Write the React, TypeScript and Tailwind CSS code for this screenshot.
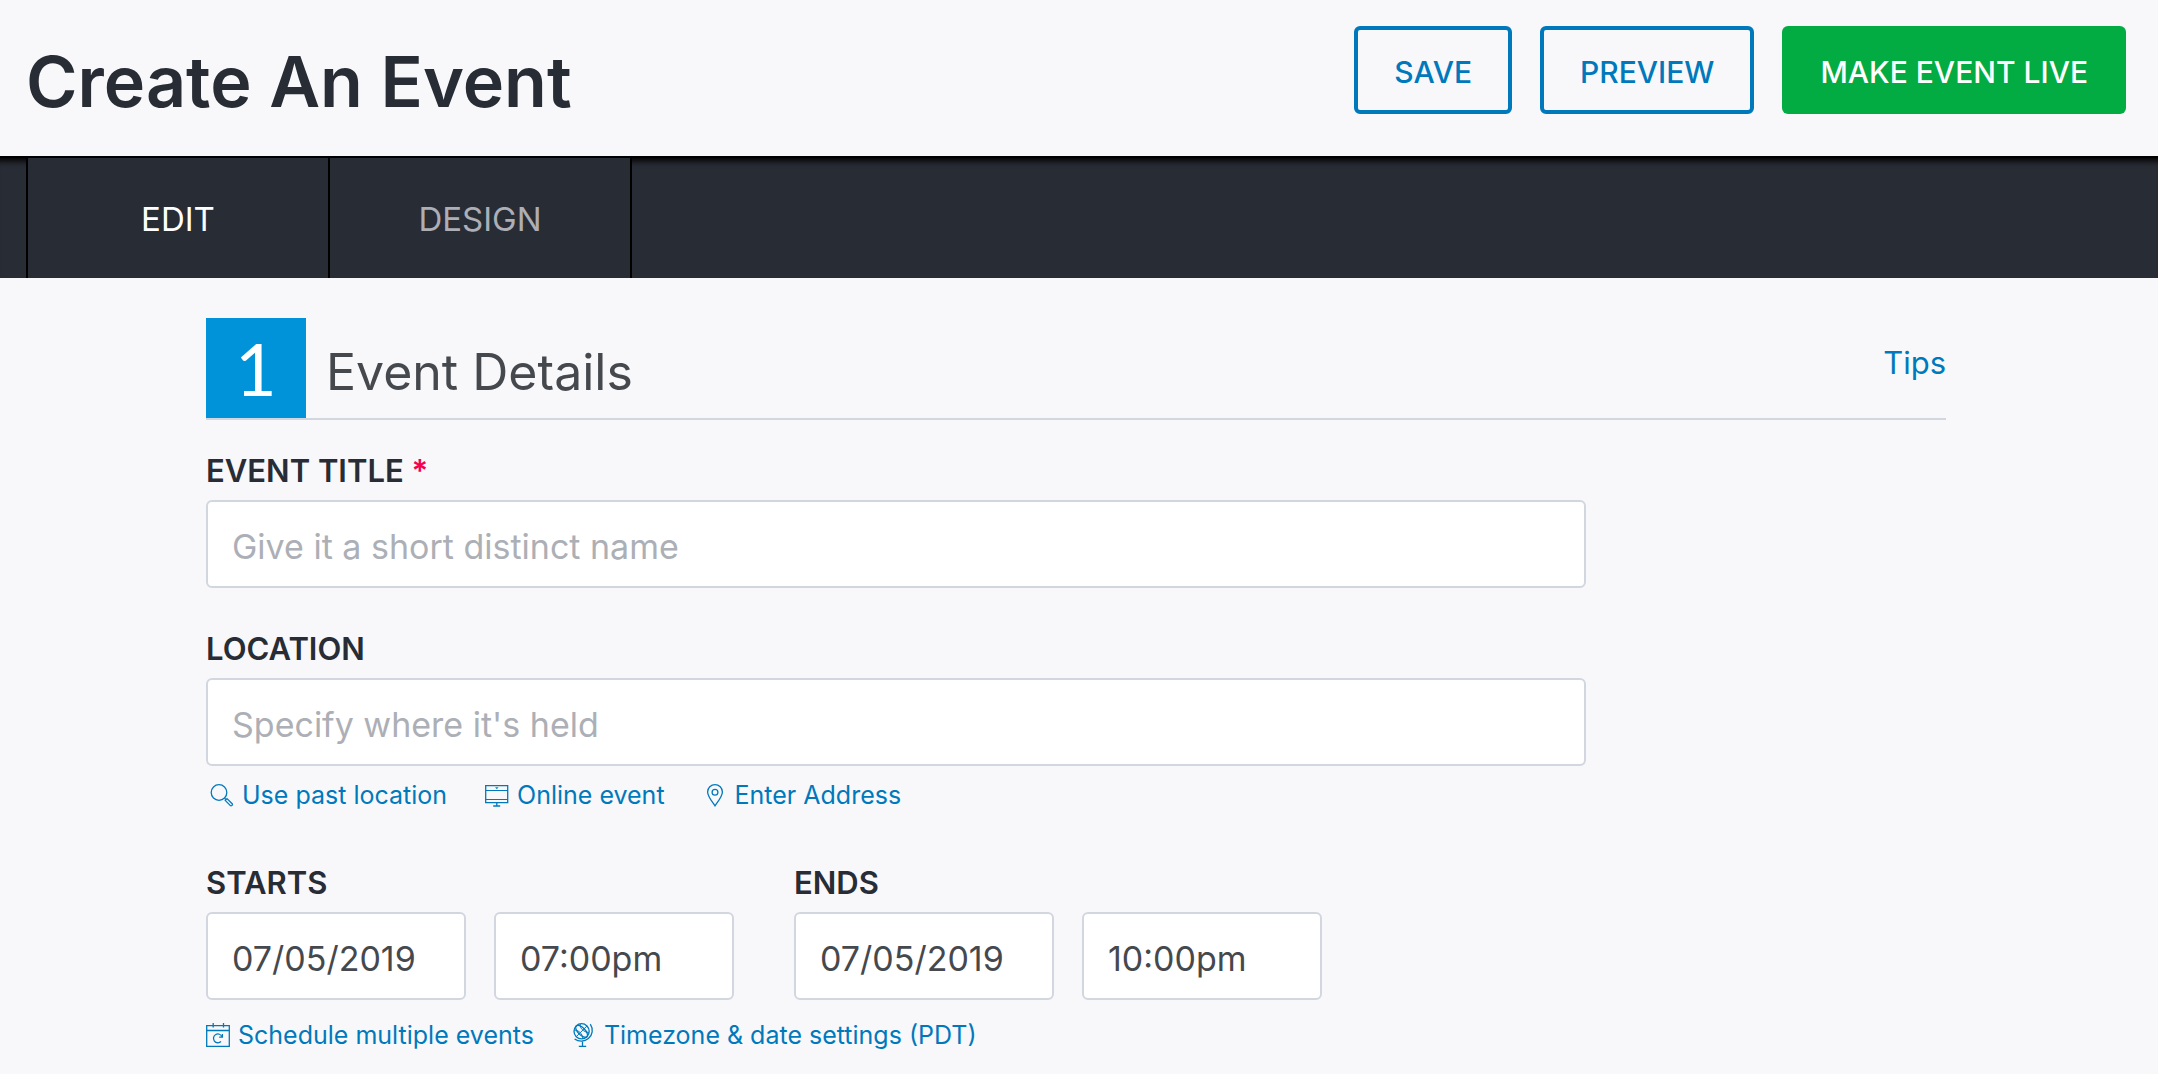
import { ReactNode } from "react";

const iconProps = {
  width: 24,
  height: 24,
  viewBox: "0 0 24 24",
  fill: "none",
  stroke: "currentColor",
  strokeWidth: 1.3,
  "aria-hidden": true,
  className: "shrink-0",
};

function SearchIcon() {
  return (
    <svg {...iconProps}>
      <circle cx="9" cy="9.5" r="7.8" />
      <path d="M14.6 15.2l1.4 1.4" />
      <path d="M15.2 17.4l5.2 5.2a.9.9 0 0 0 1.3 0l.5-.5a.9.9 0 0 0 0-1.3L17 15.6z" />
    </svg>
  );
}

function MonitorIcon() {
  return (
    <svg {...iconProps}>
      <path d="M.7 2.7h22v17H.7z" />
      <path d="M.7 7.5h22M.7 16.5h22" strokeWidth="1" />
      <path d="M10.7 4.6h2.2l-1.1 1.2z" strokeWidth=".8" />
      <path d="M11.8 19.7v3M8.2 23h7" />
    </svg>
  );
}

function PinIcon() {
  return (
    <svg {...iconProps}>
      <path d="M12 22.8C8.6 18 4.6 13.2 4.6 9a7.4 7.4 0 0 1 14.8 0c0 4.2-4 9-7.4 13.8z" />
      <circle cx="12" cy="9.3" r="2.9" />
    </svg>
  );
}

function CalendarIcon() {
  return (
    <svg {...iconProps}>
      <path d="M.7 2.7h22.6v20.6H.7z" />
      <path d="M.7 7.5h22.6M7.2 0v4.4M17.5 0v4.4" />
      <path d="M15 18.5a4.4 4.4 0 1 1 1-4.7" />
      <path d="M16.4 10.9v3.3h-3.3" />
    </svg>
  );
}

function GlobeIcon() {
  return (
    <svg {...iconProps}>
      <circle cx="9.6" cy="8.3" r="7.6" />
      <ellipse cx="9.6" cy="8.3" rx="3.6" ry="7.6" transform="rotate(-45 9.6 8.3)" />
      <path d="M4.3 13.6L15 2.9M8.2 1c-.6 4 3.6 8.4 8.6 8.4M2.2 7.2c4.4-.4 8.6 4 8.6 8.4" strokeWidth="1" />
      <path d="M18.3 1.2c3.2 4.8 2.4 10.8-1.9 14.4-4.1 3.4-9.7 3.4-13.8.4" />
      <path d="M10.5 18.4v4.8M6.8 23.3h7.4" />
    </svg>
  );
}

function Label({ htmlFor, children }: { htmlFor: string; children: ReactNode }) {
  return (
    <label
      htmlFor={htmlFor}
      className="block mb-[10px] text-[31px] leading-[38px] font-semibold text-[#282c35]"
    >
      {children}
    </label>
  );
}

const inputStyle =
  "h-[88px] rounded-md border-2 border-[#d2d6df] bg-white px-6 pt-1 text-[34px] text-[#45494e] placeholder:text-[#adafb6]";

function HelperLink({ icon, children }: { icon: ReactNode; children: ReactNode }) {
  return (
    <a href="#" className="flex items-center gap-2 text-[25px] leading-[30px] text-[#0079bc]">
      {icon}
      {children}
    </a>
  );
}

function DateTime({ id, label, date, time }: { id: string; label: string; date: string; time: string }) {
  return (
    <div>
      <Label htmlFor={id}>{label}</Label>
      <div className="flex gap-7">
        <input id={id} defaultValue={date} className={`${inputStyle} w-[260px]`} />
        <input aria-label={`${label} time`} defaultValue={time} className={`${inputStyle} w-[240px]`} />
      </div>
    </div>
  );
}

export default function App() {
  return (
    <div className="min-h-screen bg-[#f8f8fa] font-['Inter','Liberation_Sans',sans-serif]">
      <header className="flex items-start justify-between pt-[26px] pb-[30px] pl-[26px] pr-8">
        <h1 className="mt-3 text-[70px] leading-[88px] font-semibold text-[#282c35]">
          Create An Event
        </h1>
        <div className="flex gap-7 text-[30px] font-medium">
          <button className="h-[88px] rounded-md border-4 border-[#0079bc] px-9 pt-1 text-[#0079bc]">
            SAVE
          </button>
          <button className="h-[88px] rounded-md border-4 border-[#0079bc] px-9 pt-1 text-[#0079bc]">
            PREVIEW
          </button>
          <button className="h-[88px] rounded-md bg-[#02ac43] px-[38px] pt-1 text-white">
            MAKE EVENT LIVE
          </button>
        </div>
      </header>

      <nav className="flex h-[122px] border-t-2 border-black bg-[#282c35] pl-[26px] text-[33px] shadow-[inset_0_9px_6px_-6px_#000]">
        <a
          href="#"
          className="flex w-[302px] items-center justify-center border-l-2 border-black bg-[#282c35] pt-1 text-white"
        >
          EDIT
        </a>
        <a
          href="#"
          className="flex w-[304px] items-center justify-center border-x-2 border-black bg-[#282c35] pt-1 text-[#adafb6]"
        >
          DESIGN
        </a>
      </nav>

      <main className="pt-10 pl-[206px] pr-[212px]">
        <div className="flex items-start border-b-2 border-[#d2d6df]">
          <span className="size-[100px] bg-[#0093da] text-center font-['Lato',sans-serif] text-[72px] leading-[100px] text-white">
            1
          </span>
          <h2 className="ml-5 pt-2 text-[50px] leading-[92px] text-[#45494e]">
            Event Details
          </h2>
          <a href="#" className="ml-auto text-[31px] leading-[90px] text-[#0079bc]">
            Tips
          </a>
        </div>

        <form>
          <div className="mt-8">
            <Label htmlFor="title">
              EVENT TITLE <span className="text-[#f6004f]">*</span>
            </Label>
            <input
              id="title"
              placeholder="Give it a short distinct name"
              className={`${inputStyle} w-full max-w-[1380px]`}
            />
          </div>

          <div className="mt-[42px]">
            <Label htmlFor="location">LOCATION</Label>
            <input
              id="location"
              placeholder="Specify where it's held"
              className={`${inputStyle} w-full max-w-[1380px]`}
            />
            <div className="mt-[14px] flex gap-[38px] pl-1">
              <HelperLink icon={<SearchIcon />}>Use past location</HelperLink>
              <HelperLink icon={<MonitorIcon />}>Online event</HelperLink>
              <HelperLink icon={<PinIcon />}>Enter Address</HelperLink>
            </div>
          </div>

          <div className="mt-[54px] flex gap-[60px]">
            <DateTime id="starts" label="STARTS" date="07/05/2019" time="07:00pm" />
            <DateTime id="ends" label="ENDS" date="07/05/2019" time="10:00pm" />
          </div>
          <div className="mt-5 flex gap-[38px]">
            <HelperLink icon={<CalendarIcon />}>Schedule multiple events</HelperLink>
            <HelperLink icon={<GlobeIcon />}>Timezone &amp; date settings (PDT)</HelperLink>
          </div>
        </form>
      </main>
    </div>
  );
}
